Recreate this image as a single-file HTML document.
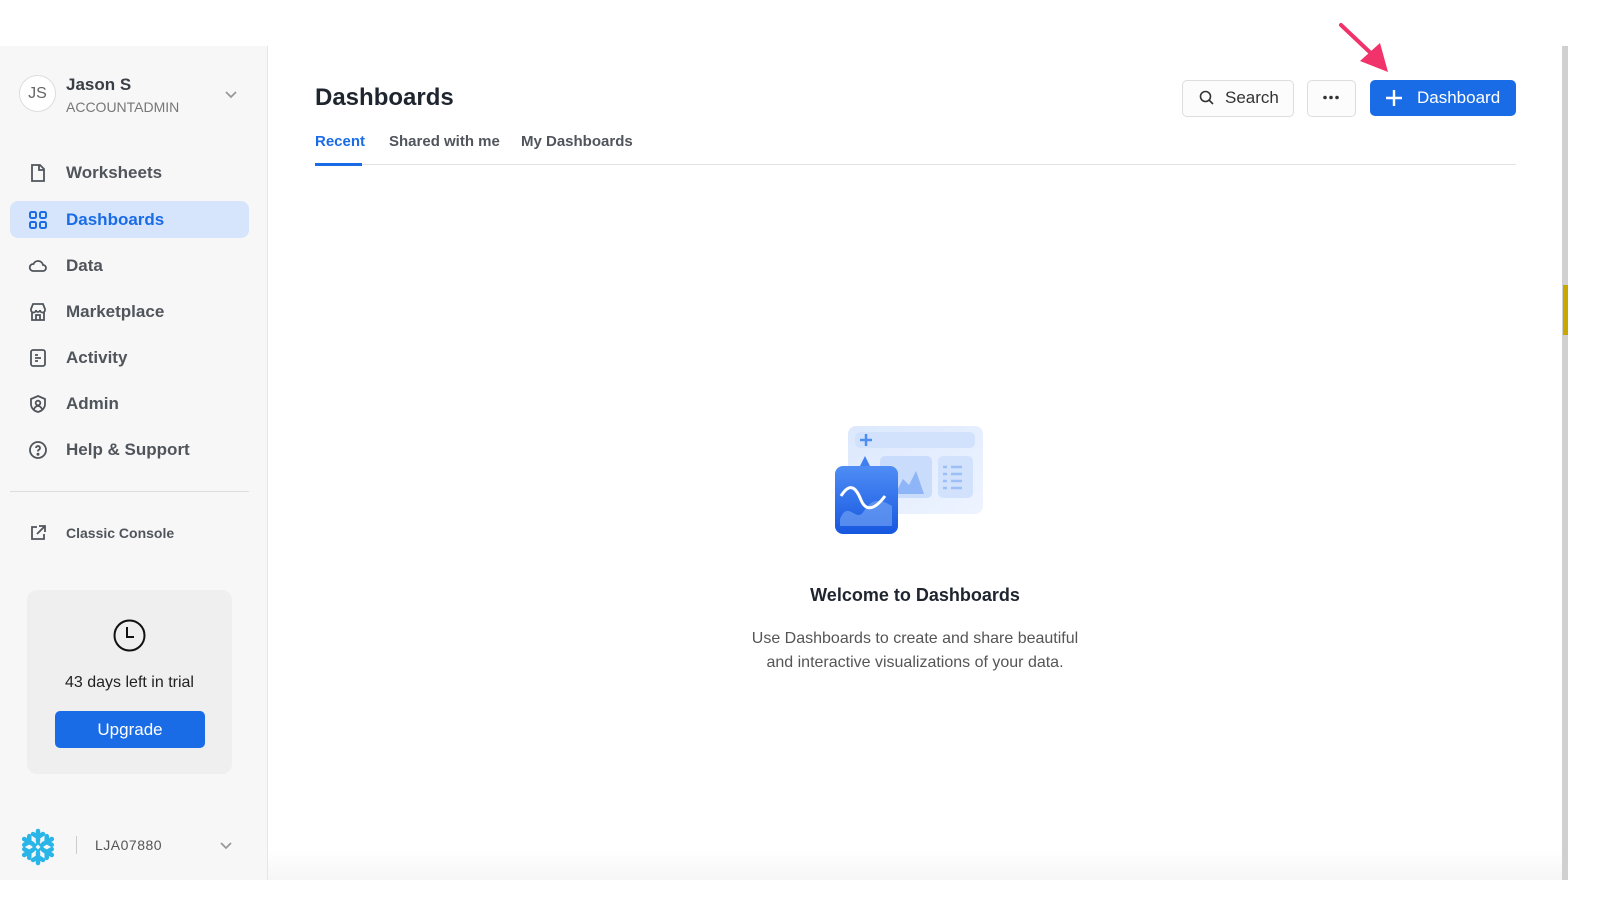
<!DOCTYPE html>
<html><head><meta charset="utf-8"><style>
*{margin:0;padding:0;box-sizing:border-box}
body{width:1600px;height:898px;overflow:hidden;background:#fff;font-family:"Liberation Sans",sans-serif;position:relative;color:#1e252f}
.side{position:absolute;left:0;top:46px;width:268px;height:834px;background:#f7f7f7;border-right:1px solid #e6e6e6}
.abs{position:absolute}
.nav{position:absolute;left:10px;width:239px;height:37px;border-radius:8px;display:flex;align-items:center;font-size:17px;font-weight:bold;color:#50555c}
.nav svg{position:absolute;left:18px}
.nav span{position:absolute;left:56px}
.nav.act{background:#d6e5fb;color:#1a6ce6}
</style></head><body>
<div class="side">
  <div class="abs" style="left:19px;top:29px;width:37px;height:37px;border-radius:50%;border:1px solid #ddd;background:#fff;font-size:16px;color:#666;text-align:center;line-height:35px">JS</div>
  <div class="abs" style="left:66px;top:29px;font-size:17px;font-weight:bold;color:#3a3f46">Jason S</div>
  <div class="abs" style="left:66px;top:53px;font-size:14px;color:#777">ACCOUNTADMIN</div>
  <svg class="abs" style="left:224px;top:44px" width="14" height="10" viewBox="0 0 14 10"><path d="M2 2l5 5 5-5" fill="none" stroke="#999" stroke-width="1.8"/></svg>

  <div class="nav" style="top:108px"><svg width="20" height="20" viewBox="0 0 20 20" fill="none" stroke="#50555c" stroke-width="1.8"><path d="M4 2h8l4 4v12H4z M11 2v5h5"/></svg><span>Worksheets</span></div>
  <div class="nav act" style="top:155px"><svg width="20" height="20" viewBox="0 0 20 20" fill="none" stroke="#1a6ce6" stroke-width="2"><rect x="2" y="2" width="6" height="6" rx="1.5"/><rect x="12" y="2" width="6" height="6" rx="1.5"/><rect x="2" y="12" width="6" height="6" rx="1.5"/><rect x="12" y="12" width="6" height="6" rx="1.5"/></svg><span>Dashboards</span></div>
  <div class="nav" style="top:201px"><svg width="20" height="20" viewBox="0 0 20 20" fill="none" stroke="#50555c" stroke-width="1.8"><path d="M5 15h10a3 3 0 0 0 0-6 5 5 0 0 0-9.5-1A3.5 3.5 0 0 0 5 15z"/></svg><span>Data</span></div>
  <div class="nav" style="top:247px"><svg width="20" height="20" viewBox="0 0 20 20" fill="none" stroke="#50555c" stroke-width="1.8"><path d="M3 7l2-5h10l2 5v1a2.5 2.5 0 0 1-5 0 2 2 0 0 1-4 0 2.5 2.5 0 0 1-5 0z M4 10v8h12v-8 M8 18v-5h4v5"/></svg><span>Marketplace</span></div>
  <div class="nav" style="top:293px"><svg width="20" height="20" viewBox="0 0 20 20" fill="none" stroke="#50555c" stroke-width="1.8"><rect x="3" y="2" width="14" height="16" rx="2"/><path d="M7 7h3M7 10h6M7 13h3"/></svg><span>Activity</span></div>
  <div class="nav" style="top:339px"><svg width="20" height="20" viewBox="0 0 20 20" fill="none" stroke="#50555c" stroke-width="1.8"><path d="M10 2l7 3v5c0 4-3 7-7 8-4-1-7-4-7-8V5z"/><circle cx="10" cy="9" r="2.3"/><path d="M6 15c1-2 2.5-3 4-3s3 1 4 3"/></svg><span>Admin</span></div>
  <div class="nav" style="top:385px"><svg width="20" height="20" viewBox="0 0 20 20" fill="none" stroke="#50555c" stroke-width="1.8"><circle cx="10" cy="10" r="8"/><path d="M8 8a2 2 0 1 1 2.5 2c-.5.2-.5.7-.5 1.5"/><circle cx="10" cy="14.2" r=".6" fill="#50555c"/></svg><span>Help &amp; Support</span></div>
  <div class="abs" style="left:10px;top:445px;width:239px;height:1px;background:#ddd"></div>
  <div class="nav" style="top:468px;font-size:14px"><svg width="20" height="20" viewBox="0 0 20 20" fill="none" stroke="#50555c" stroke-width="1.8"><path d="M9 4H4v12h12v-5 M11 3h6v6 M17 3l-8 8"/></svg><span>Classic Console</span></div>

  <div class="abs" style="left:27px;top:544px;width:205px;height:184px;background:#efefef;border-radius:10px">
    <svg class="abs" style="left:86px;top:29px" width="33" height="33" viewBox="0 0 33 33" fill="none" stroke="#111" stroke-width="2"><circle cx="16.5" cy="16.5" r="15"/><path d="M14 8v10h7"/></svg>
    <div class="abs" style="left:0;width:205px;top:84px;text-align:center;font-size:16px;color:#222">43 days left in trial</div>
    <div class="abs" style="left:28px;top:121px;width:150px;height:37px;background:#1a6ce6;border-radius:5px;color:#fff;font-size:17px;text-align:center;line-height:37px">Upgrade</div>
  </div>

  <svg class="abs" style="left:19px;top:782px" width="38" height="38" viewBox="-19 -19 38 38" fill="none" stroke="#29b5e8" stroke-width="4.5" stroke-linecap="round">
    <g id="a"><path d="M0 -6V-16 M-5 -13l5 3 5-3"/></g>
    <use href="#a" transform="rotate(60)"/><use href="#a" transform="rotate(120)"/><use href="#a" transform="rotate(180)"/><use href="#a" transform="rotate(240)"/><use href="#a" transform="rotate(300)"/>
    <rect x="-3" y="-3" width="6" height="6" transform="rotate(45)" stroke-width="2.5"/>
  </svg>
  <div class="abs" style="left:76px;top:790px;width:1px;height:18px;background:#ccc"></div>
  <div class="abs" style="left:95px;top:791px;font-size:14px;color:#555;letter-spacing:.5px">LJA07880</div>
  <svg class="abs" style="left:219px;top:795px" width="14" height="10" viewBox="0 0 14 10"><path d="M2 2l5 5 5-5" fill="none" stroke="#999" stroke-width="1.8"/></svg>
</div>

<div class="abs" style="left:315px;top:84px;font-size:24px;font-weight:bold;color:#1e252f">Dashboards</div>
<div class="abs" style="left:315px;top:133px;font-size:15px;font-weight:bold;color:#1a6ce6">Recent</div>
<div class="abs" style="left:389px;top:133px;font-size:15px;font-weight:bold;color:#50555c">Shared with me</div>
<div class="abs" style="left:521px;top:133px;font-size:15px;font-weight:bold;color:#50555c">My Dashboards</div>
<div class="abs" style="left:315px;top:164px;width:1201px;height:1px;background:#e3e3e3"></div>
<div class="abs" style="left:315px;top:163px;width:47px;height:3px;background:#1a6ce6"></div>

<div class="abs" style="left:1182px;top:80px;width:112px;height:37px;border:1px solid #ddd;border-radius:5px;background:#fcfcfc"></div>
<svg class="abs" style="left:1198px;top:89px" width="18" height="18" viewBox="0 0 18 18" fill="none" stroke="#333" stroke-width="1.6"><circle cx="7.5" cy="7.5" r="5"/><path d="M11 11l4 4"/></svg>
<div class="abs" style="left:1225px;top:88px;font-size:17px;color:#333">Search</div>
<div class="abs" style="left:1307px;top:80px;width:49px;height:37px;border:1px solid #ddd;border-radius:5px;background:#fcfcfc"></div>
<svg class="abs" style="left:1322px;top:95px" width="18" height="5" viewBox="0 0 18 5" fill="#333"><circle cx="3" cy="2.5" r="1.8"/><circle cx="9" cy="2.5" r="1.8"/><circle cx="15" cy="2.5" r="1.8"/></svg>
<div class="abs" style="left:1370px;top:80px;width:146px;height:36px;background:#1a6ce6;border-radius:5px"></div>
<svg class="abs" style="left:1384px;top:88px" width="20" height="20" viewBox="0 0 20 20" stroke="#fff" stroke-width="2.4"><path d="M10 2v16M2 10h16"/></svg>
<div class="abs" style="left:1417px;top:88px;font-size:17px;color:#fff">Dashboard</div>

<svg class="abs" style="left:1336px;top:20px" width="56" height="56" viewBox="0 0 56 56"><path d="M5 5L40 38" stroke="#f0336a" stroke-width="4" stroke-linecap="round"/><path d="M52 52L24 41 44 23z" fill="#f0336a"/></svg>

<div class="abs" style="left:1562px;top:46px;width:6px;height:834px;background:#d0d0d0"></div>
<div class="abs" style="left:1563px;top:285px;width:5px;height:50px;background:#c8a800"></div>

<svg class="abs" style="left:835px;top:424px" width="150" height="112" viewBox="0 0 150 112">
  <defs>
    <linearGradient id="g1" x1="0" y1="0" x2="1" y2="1"><stop offset="0" stop-color="#dce8fd"/><stop offset="1" stop-color="#eef4ff"/></linearGradient>
    <linearGradient id="g2" x1="0" y1="0" x2="0" y2="1"><stop offset="0" stop-color="#4f8df5"/><stop offset="1" stop-color="#1657e0"/></linearGradient>
  </defs>
  <rect x="13" y="2" width="135" height="88" rx="8" fill="url(#g1)"/>
  <rect x="20" y="8" width="120" height="16" rx="5" fill="#d2e2fc"/>
  <path d="M31 10v12M25 16h12" stroke="#4f8df5" stroke-width="2.5"/>
  <rect x="45" y="32" width="52" height="42" rx="5" fill="#c9dcfb"/>
  <path d="M60 70l8-15 6 6 7-14 8 23z" fill="#8db5f7"/>
  <rect x="103" y="32" width="35" height="42" rx="5" fill="#d2e2fc"/>
  <path d="M108 43h4M116 43h11M108 50h4M116 50h11M108 57h4M116 57h11M108 64h4M116 64h11" stroke="#9dbff8" stroke-width="2.5"/>
  <path d="M24 44l6-12 6 12" fill="#3f7ff0"/>
  <rect x="0" y="42" width="63" height="68" rx="8" fill="url(#g2)"/>
  <path d="M5 95c8-20 16 5 24-8s16-12 28-5v20H5z" fill="#7aa8f5" opacity=".6"/>
  <path d="M6 72c10-16 16-6 20 4s12 12 24-4" stroke="#fff" stroke-width="3" fill="none"/>
</svg>

<div class="abs" style="left:0;width:1830px;top:585px;text-align:center;font-size:18px;font-weight:bold;color:#1e252f">Welcome to Dashboards</div>
<div class="abs" style="left:0;width:1830px;top:627px;text-align:center;font-size:16px;line-height:24px;color:#555">Use Dashboards to create and share beautiful<br>and interactive visualizations of your data.</div>
<div class="abs" style="left:268px;top:850px;width:1294px;height:30px;background:linear-gradient(#fff,#f6f6f6)"></div>
</body></html>
